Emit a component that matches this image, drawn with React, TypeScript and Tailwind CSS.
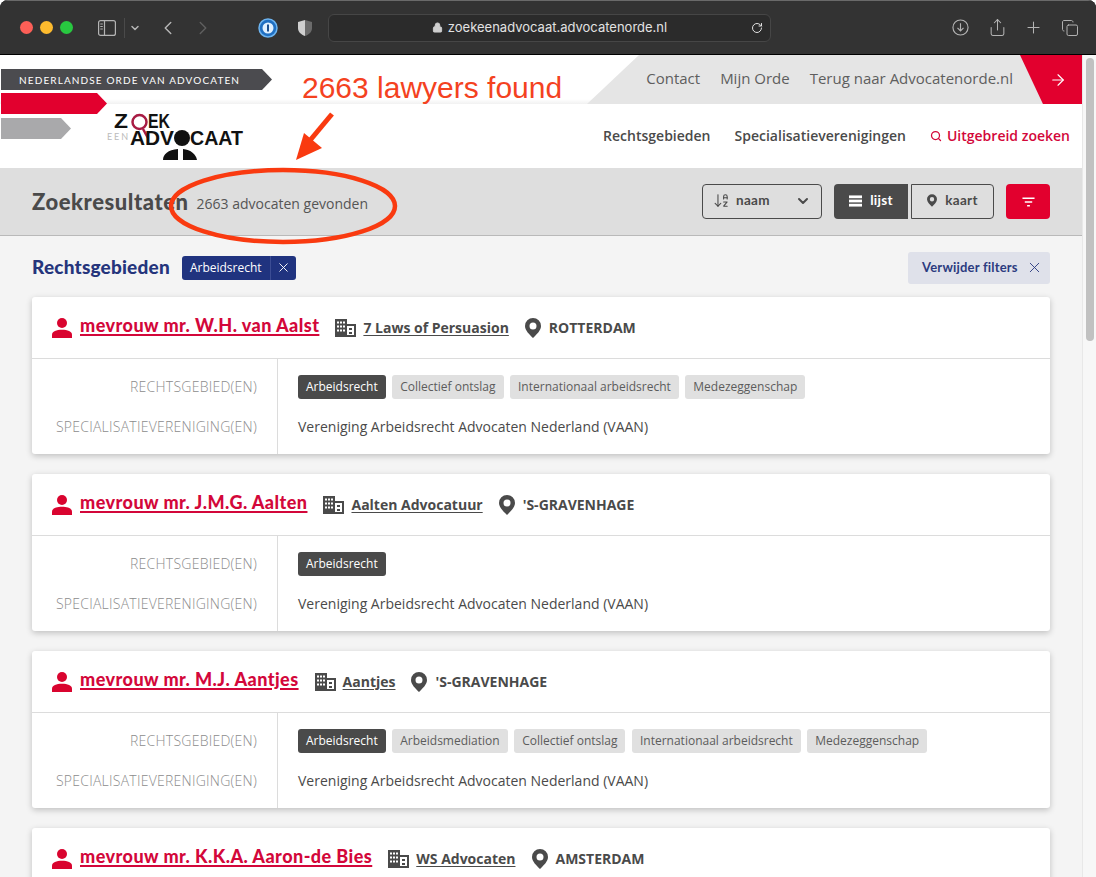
import { ArrowDownAZ, ArrowRight, ChevronDown, ChevronLeft, ChevronRight, Copy, Lock, Plus, RotateCw, Search, Share, X } from "lucide-react";

const heading = "font-['Lato',sans-serif]";

type Lawyer = {
  name: string;
  office: string;
  city: string;
  areas: string[];
};

const lawyers: Lawyer[] = [
  {
    name: "mevrouw mr. W.H. van Aalst",
    office: "7 Laws of Persuasion",
    city: "ROTTERDAM",
    areas: ["Arbeidsrecht", "Collectief ontslag", "Internationaal arbeidsrecht", "Medezeggenschap"],
  },
  {
    name: "mevrouw mr. J.M.G. Aalten",
    office: "Aalten Advocatuur",
    city: "'S-GRAVENHAGE",
    areas: ["Arbeidsrecht"],
  },
  {
    name: "mevrouw mr. M.J. Aantjes",
    office: "Aantjes",
    city: "'S-GRAVENHAGE",
    areas: ["Arbeidsrecht", "Arbeidsmediation", "Collectief ontslag", "Internationaal arbeidsrecht", "Medezeggenschap"],
  },
  {
    name: "mevrouw mr. K.K.A. Aaron-de Bies",
    office: "WS Advocaten",
    city: "AMSTERDAM",
    areas: ["Arbeidsrecht"],
  },
];

const UserIcon = () => (
  <svg viewBox="0 0 20 20" className="h-5 w-5 shrink-0 fill-[#d9042f]">
    <circle cx="10" cy="5" r="5" />
    <path d="M0 20v-3.500c0-3 4.500-4.700 10-4.700s10 1.700 10 4.700v3.500z" />
  </svg>
);

const BuildingIcon = () => (
  <svg viewBox="0 0 21 18" className="h-[18px] w-[21px] shrink-0">
    <path d="M0 0h12v5h9v13H0zM12 7v9h7V7z" fill="#4a4a4a" />
    <path
      d="M2 2.500h2v2H2zM5 2.500h2v2H5zM8 2.500h2v2H8zM2 6.500h2v2H2zM5 6.500h2v2H5zM8 6.500h2v2H8zM2 10.500h2v2H2zM5 10.500h2v2H5zM8 10.500h2v2H8z"
      fill="#ffffff"
    />
    <path d="M14 9h3v2h-3zM14 13h3v2h-3z" fill="#4a4a4a" />
  </svg>
);

const PinIcon = ({ className }: { className: string }) => (
  <svg viewBox="0 0 16 20" className={className}>
    <path
      fillRule="evenodd"
      d="M8 0a8 8 0 0 1 8 8c0 4.500-4.500 8.500-8 12-3.500-3.500-8-7.500-8-12a8 8 0 0 1 8-8zm0 4.500a3.500 3.500 0 1 0 0 7 3.500 3.500 0 0 0 0-7z"
    />
  </svg>
);

const LawyerCard = ({ lawyer }: { lawyer: Lawyer }) => (
  <div className="h-[157px] shrink-0 rounded-[3px] bg-white shadow-[0_2px_6px_rgba(0,0,0,0.22)]">
    <div className="flex h-[62px] items-center border-b border-[#dcdcdc] pl-5">
      <UserIcon />
      <a className={`ml-2 -mt-[4px] text-[18px] font-black tracking-[0.45px] text-[#d3073a] underline decoration-2 underline-offset-2 ${heading}`}>
        {lawyer.name}
      </a>
      <span className="ml-4"><BuildingIcon /></span>
      <a className="ml-[7px] text-sm font-bold text-[#4a4a4a] underline underline-offset-2">{lawyer.office}</a>
      <PinIcon className="ml-4 h-5 w-4 shrink-0 fill-[#4a4a4a]" />
      <span className="ml-2 text-sm font-bold text-[#4a4a4a]">{lawyer.city}</span>
    </div>
    <div className="flex h-[95px]">
      <div className="flex w-[246px] shrink-0 flex-col items-end gap-[22px] border-r border-[#dcdcdc] pr-5 pt-[19px] text-sm font-light leading-[18px] tracking-[0.25px] text-[#8c8c8c]">
        <span>RECHTSGEBIED(EN)</span>
        <span>SPECIALISATIEVERENIGING(EN)</span>
      </div>
      <div className="pl-5 pt-4">
        <div className="flex gap-[6.5px]">
          {lawyer.areas.map((area, i) => (
            <span
              key={area}
              className={`flex h-6 items-center rounded-[3px] px-2 text-xs ${i === 0 ? "bg-[#4a4a4a] text-white" : "bg-[#e0e0e0] text-[#5c5c5c]"}`}
            >
              {area}
            </span>
          ))}
        </div>
        <p className="mt-[19px] text-sm leading-[18px] text-[#4a4a4a]">
          Vereniging Arbeidsrecht Advocaten Nederland (VAAN)
        </p>
      </div>
    </div>
  </div>
);

const BrowserBar = () => (
  <div className="flex h-[55px] shrink-0 items-center border-b border-black border-t border-t-[#6a6a6a] bg-[#333333] text-[#b4b4b4]">
    <div className="ml-5 flex gap-[7px]">
      <span className="h-[13px] w-[13px] rounded-full bg-[#fc5f57]" />
      <span className="h-[13px] w-[13px] rounded-full bg-[#fdbb2e]" />
      <span className="h-[13px] w-[13px] rounded-full bg-[#28c840]" />
    </div>
    <svg viewBox="0 0 18 16" className="ml-[25px] h-4 w-[18px] fill-none stroke-[#b4b4b4] stroke-[1.2]">
      <rect x="0.600" y="0.600" width="16.800" height="14.800" rx="2" />
      <path d="M6.500 0.600v14.800M2.300 4h2.500M2.300 6.500h2.500M2.300 9h2.500" />
    </svg>
    <span className="ml-2 h-5 w-px bg-[#4a4a4a]" />
    <ChevronDown className="ml-[4px] h-3 w-3 stroke-[3]" />
    <ChevronLeft className="ml-[16px] h-[22px] w-[22px] stroke-[1.600]" />
    <ChevronRight className="ml-[13px] h-[22px] w-[22px] stroke-[1.600] text-[#5e5e5e]" />
    <svg viewBox="0 0 20 20" className="ml-[44px] h-5 w-5">
      <circle cx="10" cy="10" r="9" fill="#1f6fc2" stroke="#6db4f0" strokeWidth="1.500" />
      <circle cx="10" cy="10" r="5.500" fill="#dff0ff" />
      <rect x="9" y="6.500" width="2" height="7" fill="#1a4f8f" />
    </svg>
    <svg viewBox="0 0 16 18" className="ml-[19px] h-[18px] w-4">
      <path d="M8 1 1 3v6c0 4 3 6.500 7 8z" fill="#cfcfcf" />
      <path d="M8 1l7 2v6c0 4-3 6.500-7 8z" fill="#6b6b6b" />
    </svg>
    <div className="relative ml-[15px] flex h-7 w-[443px] items-center justify-center rounded-md border border-[#464646] bg-[#2b2b2b] text-[13px] text-[#e2e2e2]">
      <Lock className="mr-[5px] h-[11px] w-[11px] fill-[#cfcfcf] stroke-[#cfcfcf]" />
      <span className="font-['Inter',sans-serif]">zoekeenadvocaat.advocatenorde.nl</span>
      <RotateCw className="absolute right-[7px] h-3 w-3" />
    </div>
    <svg viewBox="0 0 18 18" className="ml-[181px] h-[17px] w-[17px] fill-none stroke-[#b4b4b4] stroke-[1.200]">
      <circle cx="9" cy="9" r="8" />
      <path d="M9 4.500v8M5.800 9.500 9 12.700l3.200-3.200" />
    </svg>
    <Share className="ml-[19px] h-[19px] w-[19px] stroke-[1.300]" />
    <Plus className="ml-[17px] h-[19px] w-[19px] stroke-[1.300]" />
    <Copy className="ml-[18px] h-[18px] w-[18px] stroke-[1.300]" />
  </div>
);

const SiteHeader = () => (
  <>
    <div className="relative flex h-[49px] justify-end bg-[linear-gradient(to_bottom,#ffffff_90%,#f1f1f1)]">
      <div className="flex w-[495px] items-center justify-end bg-[#e5e5e5] pb-[2px] pr-[69px] text-[15px] text-[#5e5e5e] [clip-path:polygon(52px_0,100%_0,100%_100%,0_100%)]">
        <div className="flex gap-5">
          <span>Contact</span>
          <span>Mijn Orde</span>
          <span>Terug naar Advocatenorde.nl</span>
        </div>
      </div>
      <div className="absolute right-0 top-0 flex h-[49px] w-[62px] items-center justify-end bg-[#e2002e] pr-[15px] [clip-path:polygon(0_0,100%_0,100%_100%,37%_100%)]">
        <ArrowRight className="h-[18px] w-[18px] stroke-white stroke-[1.500]" />
      </div>
    </div>
    <div className="flex h-[64px] items-center justify-end gap-6 pr-[12px] text-sm font-semibold text-[#4a4a4a]">
      <span>Rechtsgebieden</span>
      <span>Specialisatieverenigingen</span>
      <span className="flex items-center gap-[5px] text-[#d3073a]">
        <Search className="h-3 w-3 stroke-[2.500]" />
        Uitgebreid zoeken
      </span>
    </div>
  </>
);

// orde flags and the zoek-een-advocaat mark, they hang over the two header rows
const Logo = () => (
  <svg viewBox="0 0 272 92" className="absolute left-0 top-[69px] h-[92px] w-[272px]">
    <path d="M1 0h261l10 10.500-10 10.500H1z" fill="#4b4b4f" />
    <path d="M1 24h96l10 10.500L97 45H1z" fill="#e2002e" />
    <path d="M1 49h60l10 10.500L61 70H1z" fill="#a9a9ab" />
    <text x="19" y="14.500" fontFamily="Lato, sans-serif" fontSize="10" fill="#ffffff" textLength="220">
      NEDERLANDSE ORDE VAN ADVOCATEN
    </text>
    <text x="114" y="59" fontFamily="Liberation Sans, sans-serif" fontWeight="700" fontSize="20" fill="#111111" textLength="14" lengthAdjust="spacingAndGlyphs">
      Z
    </text>
    <path d="M143 60l5 9" stroke="#a81c44" strokeWidth="2.500" />
    <circle cx="139.500" cy="53" r="7" fill="none" stroke="#a81c44" strokeWidth="2.500" />
    <text x="148" y="59" fontFamily="Liberation Sans, sans-serif" fontWeight="700" fontSize="20" fill="#111111" textLength="22" lengthAdjust="spacingAndGlyphs">
      EK
    </text>
    <text x="107" y="71" fontFamily="Lato, sans-serif" fontSize="9" fill="#bbbbbb" textLength="21">
      EEN
    </text>
    <text x="130" y="76" fontFamily="Liberation Sans, sans-serif" fontWeight="700" fontSize="20" fill="#111111" textLength="44" lengthAdjust="spacingAndGlyphs">
      ADV
    </text>
    <circle cx="182" cy="69" r="8" fill="#111111" />
    <text x="190" y="76" fontFamily="Liberation Sans, sans-serif" fontWeight="700" fontSize="20" fill="#111111" textLength="53" lengthAdjust="spacingAndGlyphs">
      CAAT
    </text>
    <path d="M163 91c0-6 5-10 15-11v11zM183 80c8 1 13 5 14 11h-14z" fill="#111111" />
  </svg>
);

// red notes drawn on top of the screenshot
const Annotations = () => (
  <>
    <span className="absolute left-[302px] top-[70px] font-['Liberation_Sans',sans-serif] text-[30px] leading-[36px] text-[#f4421f]">
      2663 lawyers found
    </span>
    <svg viewBox="0 0 1096 877" className="pointer-events-none absolute left-0 top-0 h-[877px] w-[1096px]">
      <path d="M332 114 307 144" stroke="#f93a10" strokeWidth="5" fill="none" />
      <path d="M296 160l8-27 18 15z" fill="#f93a10" />
      <ellipse cx="283" cy="206" rx="112" ry="36" fill="none" stroke="#f93a10" strokeWidth="4.500" />
    </svg>
  </>
);

const App = () => {
  return (
    <div className="relative flex h-[877px] w-[1096px] flex-col overflow-hidden rounded-t-[8px] bg-black font-['Open_Sans',sans-serif]">
      <BrowserBar />
      <div className="flex min-h-0 flex-1 bg-white">
        <main className="relative flex min-w-0 flex-1 flex-col bg-[#f4f4f4]">
          <div className="bg-white">
            <SiteHeader />
          </div>
          <div className="flex h-[68px] shrink-0 items-center border-b border-[#b9b9b9] bg-[#dedede] pl-8 pr-8">
            <h1 className={`text-[22px] font-black tracking-[0.55px] text-[#4a4a4a] ${heading}`}>Zoekresultaten</h1>
            <span className="ml-2 mt-[5px] text-sm text-[#555555]">2663 advocaten gevonden</span>
            <div className={`ml-auto flex h-[35px] items-center text-[13.5px] font-bold tracking-[0.3px] text-[#4a4a4a] ${heading}`}>
              <div className="flex h-[35px] w-[120px] items-center rounded border border-[#4a4a4a] pb-[2px] pl-[10px] pr-[10px]">
                <ArrowDownAZ className="h-[17px] w-[17px] stroke-[1.500]" />
                <span className="ml-[6px]">naam</span>
                <ChevronDown className="ml-auto h-4 w-4 stroke-[3]" />
              </div>
              <div className="ml-3 flex h-[35px] w-[74px] items-center justify-center gap-2 rounded-l bg-[#4a4a4a] pb-[2px] text-white">
                <svg viewBox="0 0 14 12" className="h-3 w-[13px] fill-white">
                  <rect width="14" height="3" y="0" />
                  <rect width="14" height="3" y="4.500" />
                  <rect width="14" height="3" y="9" />
                </svg>
                lijst
              </div>
              <div className="ml-[3px] flex h-[35px] w-[83px] items-center justify-center gap-2 rounded-r border border-[#4a4a4a] pb-[2px]">
                <PinIcon className="h-[13px] w-[10px] fill-[#4a4a4a]" />
                kaart
              </div>
              <div className="ml-3 flex h-[35px] w-11 items-center justify-center rounded bg-[#e2002e]">
                <svg viewBox="0 0 14 10" className="h-[10px] w-[13px] stroke-white stroke-[1.500]">
                  <path d="M0.500 1h13M3 5h8M5.500 9h3" />
                </svg>
              </div>
            </div>
          </div>
          <div className="flex h-[61px] shrink-0 items-center px-8 pt-[2px]">
            <h2 className={`text-[19px] font-black tracking-[0.2px] text-[#25357c] ${heading}`}>Rechtsgebieden</h2>
            <div className="ml-3 flex h-6 items-center rounded-[3px] bg-[#20337f] text-xs text-white">
              <span className="border-r border-[#3c4d94] py-[5px] pl-2 pr-2 leading-[14px]">Arbeidsrecht</span>
              <X className="mx-[5px] h-[15px] w-[15px] stroke-[1.500]" />
            </div>
            <div className={`ml-auto flex h-8 w-[142px] items-center gap-2 rounded-[3px] bg-[#dfe1ea] pl-[14px] text-[13px] font-bold tracking-[0.2px] text-[#2c3b80] ${heading}`}>
              Verwijder filters
              <X className="h-[17px] w-[17px] stroke-[1.300]" />
            </div>
          </div>
          <div className="flex flex-col gap-5 pl-8 pr-8">
            {lawyers.map((lawyer) => (
              <LawyerCard key={lawyer.name} lawyer={lawyer} />
            ))}
          </div>
        </main>
        <div className="flex w-[14px] shrink-0 justify-center border-l border-[#e8e8e8] bg-[#f7f7f7] pt-[3px]">
          <div className="h-[283px] w-2 rounded-full bg-[#c1c1c1]" />
        </div>
      </div>
      <Logo />
      <Annotations />
    </div>
  );
};

export default App;
